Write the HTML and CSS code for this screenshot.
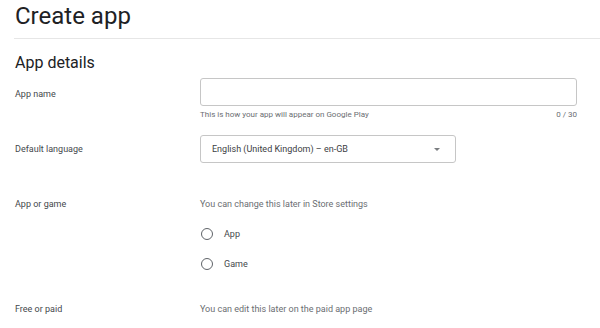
FILE: index.html
```html
<!DOCTYPE html>
<html lang="en">
<head>
    <meta charset="UTF-8">
    <meta name="viewport" content="width=device-width, initial-scale=1.0">
    <title>Create app</title>
    <link rel="stylesheet" href="styles.css">
</head>
<body>
    <div class="page-header">
        <h1>Create app</h1>
    </div>

    <div class="section">
        <h2>App details</h2>

        <div class="form-row first-row">
            <div class="row-label">App name</div>
            <div class="row-field">
                <input type="text" class="text-input">
                <div class="helper">
                    <span>This is how your app will appear on Google Play</span>
                    <span>0 / 30</span>
                </div>
            </div>
        </div>

        <div class="form-row lang-row">
            <div class="row-label">Default language</div>
            <div class="row-field">
                <div class="select-box">
                    <span>English (United Kingdom) – en-GB</span>
                    <span class="arrow"></span>
                </div>
            </div>
        </div>

        <div class="form-row type-row">
            <div class="row-label plain">App or game</div>
            <div class="row-field">
                <div class="hint">You can change this later in Store settings</div>
                <div class="radio-list">
                    <label class="radio-item"><span class="radio"></span>App</label>
                    <label class="radio-item"><span class="radio"></span>Game</label>
                </div>
            </div>
        </div>

        <div class="form-row price-row">
            <div class="row-label plain">Free or paid</div>
            <div class="row-field">
                <div class="hint">You can edit this later on the paid app page</div>
            </div>
        </div>
    </div>
</body>
</html>
```

FILE: styles.css
```css
body {
    margin: 0;
    font-family: Roboto, "Liberation Sans", sans-serif;
    color: #3c4043;
    background: #fff;
    overflow: hidden;
}
.page-header {
    margin-left: 14px;
    padding-top: 1px;
    padding-bottom: 7px;
    border-bottom: 1px solid #e6e6e6;
}
h1 {
    margin: 0;
    font-size: 24px;
    line-height: 30px;
    font-weight: 400;
    color: #202124;
    padding-left: 1px;
}
.section {
    padding-left: 15px;
    padding-right: 23px;
}
h2 {
    margin: 12px 0 0;
    font-size: 16px;
    line-height: 24px;
    font-weight: 400;
    color: #202124;
}
.form-row {
    display: flex;
}
.row-label {
    width: 185px;
    flex: none;
    font-size: 9px;
    line-height: 14px;
    padding-top: 7px;
    color: #45484c;
}
.row-label.plain {
    padding-top: 0;
}
.row-field {
    flex: 1;
}
.first-row {
    margin-top: 3px;
}
.first-row .row-label {
    padding-top: 9px;
}
.text-input {
    display: block;
    width: 100%;
    height: 28px;
    box-sizing: border-box;
    border: 1px solid #c6c6c6;
    border-radius: 3px;
    margin: 0;
}
.helper {
    display: flex;
    justify-content: space-between;
    font-size: 8px;
    line-height: 12px;
    margin-top: 3px;
    color: #6b6e72;
}
.lang-row {
    margin-top: 14px;
}
.select-box {
    width: 256px;
    height: 28px;
    box-sizing: border-box;
    border: 1px solid #c6c6c6;
    border-radius: 3px;
    display: flex;
    align-items: center;
    justify-content: space-between;
    padding: 0 15px 0 11px;
    font-size: 9px;
    color: #3c4043;
}
.arrow {
    width: 0;
    height: 0;
    border-left: 3px solid transparent;
    border-right: 3px solid transparent;
    border-top: 3px solid #7a7d80;
}
.type-row {
    margin-top: 34px;
}
.hint {
    font-size: 9px;
    line-height: 14px;
    color: #6b6e72;
}
.radio-list {
    margin-top: 8px;
}
.radio-item {
    display: flex;
    align-items: center;
    height: 30px;
    font-size: 9px;
    color: #45484c;
}
.radio {
    width: 12px;
    height: 12px;
    box-sizing: border-box;
    border: 1.5px solid #5f6368;
    border-radius: 50%;
    margin-left: 1px;
    margin-right: 11px;
}
.price-row {
    margin-top: 23px;
}
```
